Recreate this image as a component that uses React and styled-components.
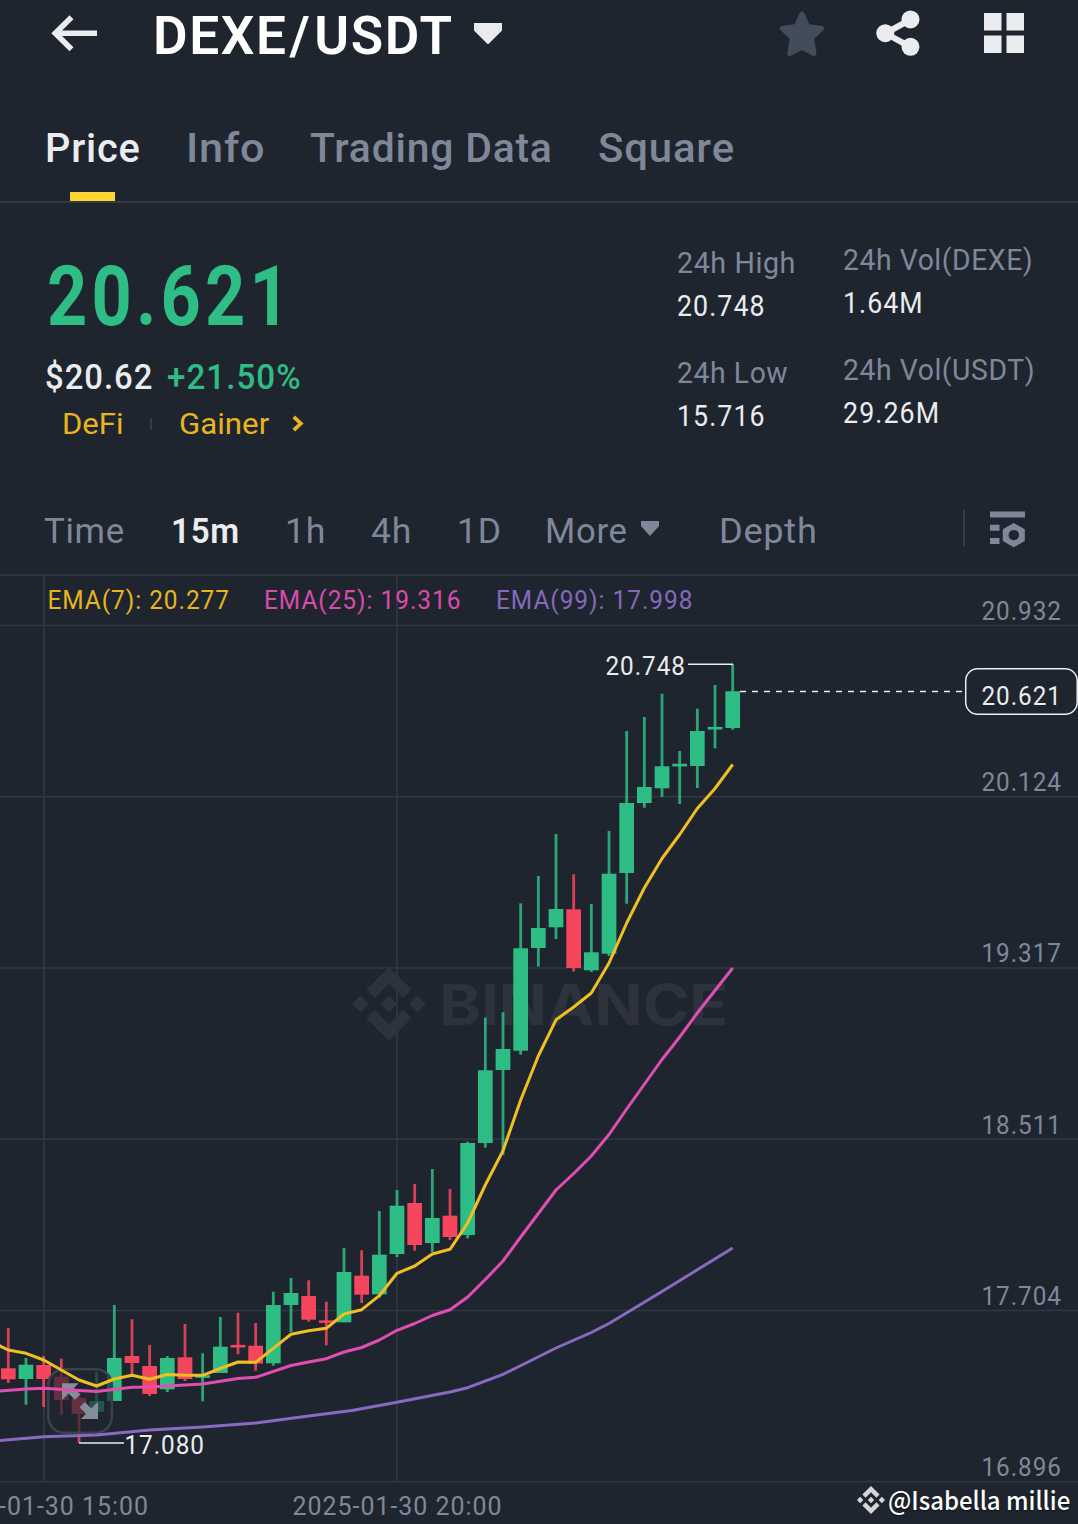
import React, { useLayoutEffect, useRef, useState } from 'react';
import styled, { createGlobalStyle } from 'styled-components';

const green = '#2ebd85';
const red = '#f6465d';
const grey = '#7f8898';
const light = '#eaecef';
const gold = '#e9b41c';

const BINANCE = 'M16.624 13.9202l2.7175 2.7154-7.353 7.353-7.353-7.352 2.7175-2.7164 4.6355 4.6595 4.6356-4.6595zm4.6366-4.6366L24 12l-2.7154 2.7164L18.5682 12l2.6924-2.7164zm-9.272.001l2.7163 2.6914-2.7164 2.7174v-.001L9.2721 12l2.7164-2.7154zm-9.2722-.001L5.4088 12l-2.6914 2.6924L0 12l2.7164-2.7164zM11.9885.0115l7.353 7.329-2.7174 2.7154-4.6356-4.6356-4.6355 4.6595-2.7174-2.7154 7.353-7.353z';

// [direction, high, body top, body bottom, low]
const candles = [
  ['r', 1328, 1368.3, 1379.3, 1383],
  ['g', 1358, 1364.7, 1379, 1404.7],
  ['r', 1356, 1365, 1379, 1407],
  ['r', 1358.7, 1376.7, 1400, 1415],
  ['r', 1390, 1398, 1414, 1442.7],
  ['g', 1371.7, 1401, 1411.7, 1411.7],
  ['g', 1305, 1358, 1401, 1401],
  ['r', 1319.3, 1356, 1363, 1375],
  ['r', 1345, 1366, 1394, 1396],
  ['g', 1356, 1358, 1389.3, 1392],
  ['r', 1324, 1357.3, 1379, 1381],
  ['g', 1353.3, 1375.3, 1377.8, 1401.3],
  ['g', 1317, 1346.7, 1373, 1373],
  ['r', 1312.7, 1344.9, 1347.5, 1354.3],
  ['r', 1323, 1345.7, 1363.5, 1370.7],
  ['g', 1291.7, 1305, 1363.3, 1365.7],
  ['g', 1278, 1293, 1305, 1332],
  ['r', 1280.3, 1296, 1319.7, 1321.7],
  ['r', 1301.7, 1320.4, 1322.9, 1345.3],
  ['g', 1248, 1272, 1322.3, 1322.3],
  ['r', 1250.3, 1275.7, 1294.7, 1303],
  ['g', 1211, 1254.7, 1294.3, 1297.7],
  ['g', 1190, 1205.7, 1254, 1257],
  ['r', 1184, 1203, 1245, 1250.7],
  ['g', 1169, 1218, 1243, 1252.3],
  ['r', 1189, 1215.7, 1237, 1240],
  ['g', 1141.7, 1143, 1235, 1238.3],
  ['g', 1017.7, 1070.3, 1143, 1147.7],
  ['g', 1012.3, 1049, 1070, 1155],
  ['g', 903.3, 948.3, 1050.7, 1054.7],
  ['g', 876, 928, 948, 966.5],
  ['g', 834, 909, 927.3, 939],
  ['r', 874.3, 909.3, 968, 971.5],
  ['g', 904, 952.3, 970.3, 972],
  ['g', 831, 873.7, 953.7, 956],
  ['g', 731, 803, 873, 903.7],
  ['g', 717, 787, 803, 807.7],
  ['g', 693.7, 766.3, 788.3, 797],
  ['g', 751, 763.8, 766.4, 804],
  ['g', 708.7, 731, 766, 788],
  ['g', 685, 726.9, 729.5, 748.3],
  ['g', 664, 691.3, 728, 729.7],
];

const ema7 = '-2,1345 8.3,1350 26,1353.3 43.7,1360 61.3,1370 79,1380 96.7,1386 114.3,1379 132,1375.3 149.7,1379.3 167.3,1374.5 185,1375.3 202.7,1375.3 220.3,1368.5 238,1362 255.7,1362.3 273.3,1348.3 291,1334.3 308.7,1330.7 326.3,1328.3 344,1314 361.7,1309.7 379.3,1295.7 397,1273.3 414.7,1266 432.3,1254 450,1249.3 467.7,1223 485.3,1185 503,1150.7 520.7,1100 538.3,1056 556,1019.8 573.7,1007 591.3,993 609,963 626.7,923 644.3,888 662,858.5 679.7,834.5 697.3,808.5 715,788.5 732.7,764.5';
const ema25 = '-2,1391.2 26,1389 43.7,1388.3 79,1390.5 96.7,1391.5 132,1387.3 149.7,1387 167.3,1386 202.7,1384 238,1378.5 255.7,1377.3 291,1365.5 308.7,1362 326.3,1358.7 344,1352 361.7,1347.5 379.3,1340 397,1330.3 414.7,1323.5 432.3,1315.5 450,1309.7 467.7,1297 485.3,1279.5 503,1261 520.7,1237 556,1190 573.7,1173.5 591.3,1156 609,1134.5 626.7,1109 662,1059.5 679.7,1037 697.3,1013 732.7,968';
const ema99 = '-2,1440.6 43.7,1436.8 96.7,1435 149.7,1430 202.7,1427 255.7,1423 308.7,1416 352,1410.5 397,1402.3 450,1392 467.7,1387.7 503,1374.3 530,1361 556,1348 591.3,1332.5 609,1323.5 662,1291.5 697.3,1269.8 732.7,1248';

const axis = [
  [625.5, '20.932'],
  [796.7, '20.124'],
  [968, '19.317'],
  [1139.2, '18.511'],
  [1310.5, '17.704'],
  [1481.7, '16.896'],
];

// squeezes or stretches a run of text to a given width
function Fit({ w, children }) {
  const ref = useRef(null);
  const [scale, setScale] = useState(1);

  useLayoutEffect(() => {
    setScale(w / ref.current.offsetWidth);
  }, [w, children]);

  return (
    <FitBox $w={w}>
      <FitText ref={ref} style={{ transform: `scaleX(${scale})` }}>{children}</FitText>
    </FitBox>
  );
}

function Stat({ label, lw, value, vw }) {
  return (
    <StatItem>
      <StatLabel><Fit w={lw}>{label}</Fit></StatLabel>
      <StatValue><Fit w={vw}>{value}</Fit></StatValue>
    </StatItem>
  );
}

function Candle({ data, x }) {
  const [dir, high, top, bottom, low] = data;
  const color = dir === 'g' ? green : red;
  return (
    <g fill={color}>
      <rect x={x - 1.4} y={high} width="2.8" height={low - high} opacity="0.85" />
      <rect x={x - 7.35} y={top} width="14.7" height={bottom - top} />
    </g>
  );
}

function Chart() {
  return (
    <ChartSvg viewBox="0 576 1078 948">
      <g fill="#2f3742">
        {axis.map(([y]) => <rect key={y} x="0" y={y - 0.8} width="1078" height="1.6" />)}
        <rect x="43" y="576" width="1.8" height="906" />
        <rect x="396.1" y="576" width="1.8" height="906" />
      </g>

      <g fill="#2d323d">
        <path d={BINANCE} transform="translate(352 967) scale(3.08)" />
        <Brand x="439" y="1024.5" textLength="289" lengthAdjust="spacingAndGlyphs">BINANCE</Brand>
      </g>

      {candles.map((c, i) => <Candle key={i} data={c} x={8.3 + i * 17.668} />)}

      <rect x="48.3" y="1369.300" width="63.5" height="63.5" rx="16" fill="#1f252f" fillOpacity="0.68" stroke="#39414c" strokeWidth="2.6" />
      <g fill="#848d9b">
        <path d="M62 1383.300h16.700l-4.700 4.700 6.300 6.500-5.300 5.300-6.500-6.300-6.500 6.500z" />
        <path d="M98 1419h-17.200l5.200-5.200-6.500-6.500 5.300-5.300 6.500 6.500 6.700-6.700z" />
      </g>

      <Line points={ema99} stroke="#8a69c2" />
      <Line points={ema25} stroke="#e14eb2" />
      <Line points={ema7} stroke="#f0bf22" />

      <g stroke={light} strokeWidth="1.5" fill="none">
        <path d="M688 664.300h45" />
        <path d="M79 1443h45" />
        <path d="M740 691.500h222" strokeDasharray="6 6" />
        <rect x="965.7" y="668.7" width="111.5" height="45.6" rx="12" />
      </g>

      <Num x="47.5" y="609" textLength="182.5" fill={gold}>EMA(7): 20.277</Num>
      <Num x="264" y="609" textLength="197.5" fill="#d94bad">EMA(25): 19.316</Num>
      <Num x="496" y="609" textLength="197.5" fill="#8668bd">EMA(99): 17.998</Num>
      {axis.map(([y, text]) => (
        <Num key={text} x="981.5" y={y - 5.7} textLength="80.5" fill={grey}>{text}</Num>
      ))}
      <Num x="981.5" y="705" textLength="80.5" fill={light}>20.621</Num>
      <Num x="605.5" y="675" textLength="80.5" fill={light}>20.748</Num>
      <Num x="124.5" y="1453.7" textLength="80.5" fill={light}>17.080</Num>
      <Num x="-61" y="1514.7" textLength="210" fill={grey}>2025-01-30 15:00</Num>
      <Num x="292.5" y="1514.7" textLength="210" fill={grey}>2025-01-30 20:00</Num>
    </ChartSvg>
  );
}

export default function App() {
  return (
    <Screen>
      <GlobalStyle />
      <Header>
        <svg width="46" height="70" viewBox="51 0 46 70" fill="none" stroke={light} strokeWidth="5.6">
          <path d="M97 33.2H56M71.5 17.3L55.3 33.2l16.2 16" />
        </svg>
        <Title><Fit w={301}>DEXE<Slash>/</Slash>USDT</Fit></Title>
        <svg width="28" height="70" viewBox="474 0 28 70" fill={light}>
          <path d="M474 23h28v7.5L488.500 44h-1L474 30.500z" />
        </svg>
        <Actions>
          <svg width="45" height="70" viewBox="779 0 45 70" fill="#434c5a" stroke="#434c5a" strokeWidth="5" strokeLinejoin="round">
            <path d="M802 14L807.500 26.500L821.500 28.500L811.500 38L814 53.500L802 47.300L789.800 53.500L792.300 38L782.300 28.500L796.300 26.500Z" />
          </svg>
          <svg width="44" height="70" viewBox="876 0 44 70" fill={light}>
            <path d="M910.500 19.500L885.500 33.300L910.500 47" fill="none" stroke={light} strokeWidth="6" />
            <circle cx="910.5" cy="19.400" r="9" />
            <circle cx="885.3" cy="33.200" r="9" />
            <circle cx="910.5" cy="46.800" r="9" />
          </svg>
          <svg width="40" height="70" viewBox="984 0 40 70" fill={light}>
            <path d="M984 13h17.500v17.500H984zM1006.500 13h17.500v17.500h-17.500zM984 35.500h17.500V53H984zM1006.500 35.500h17.500V53h-17.500z" />
          </svg>
        </Actions>
      </Header>

      <Tabs>
        <Tab $active><Fit w={96}>Price</Fit></Tab>
        <Tab><Fit w={79}>Info</Fit></Tab>
        <Tab><Fit w={243}>Trading Data</Fit></Tab>
        <Tab><Fit w={137}>Square</Fit></Tab>
      </Tabs>

      <Summary>
        <PriceSide>
          <LastPrice><Fit w={247}>20.621</Fit></LastPrice>
          <Change>
            <Fit w={108}>$20.62</Fit>
            <Up><Fit w={135}>+21.50%</Fit></Up>
          </Change>
          <Tags>
            <Fit w={61}>DeFi</Fit>
            <TagDivider />
            <Fit w={90}>Gainer</Fit>
            <svg width="12" height="17" viewBox="0 0 12 17" fill="none" stroke={gold} strokeWidth="3.8">
              <path d="M1.800 1.800L8.800 8.500L1.800 15.200" />
            </svg>
          </Tags>
        </PriceSide>
        <StatColumn $top={42} $width={166}>
          <Stat label="24h High" lw={118.5} value="20.748" vw={88.5} />
          <Stat label="24h Low" lw={111.5} value="15.716" vw={88.5} />
        </StatColumn>
        <StatColumn $top={38.5} $tight>
          <Stat label="24h Vol(DEXE)" lw={190} value="1.64M" vw={81} />
          <Stat label="24h Vol(USDT)" lw={192} value="29.26M" vw={97} />
        </StatColumn>
      </Summary>

      <Ranges>
        <Fit w={81}>Time</Fit>
        <Active><Fit w={69}>15m</Fit></Active>
        <Fit w={41}>1h</Fit>
        <Fit w={41}>4h</Fit>
        <Fit w={45}>1D</Fit>
        <More>
          <Fit w={83}>More</Fit>
          <svg width="18" height="44" viewBox="0 0 18 44" fill={grey}>
            <path d="M0 12h18v5l-8.500 9.500h-1L0 17z" />
          </svg>
        </More>
        <Depth><Fit w={99}>Depth</Fit></Depth>
        <RangeDivider />
        <svg width="35" height="44" viewBox="990 509 35 44" fill={grey}>
          <path d="M990 511.500h35v6h-35zM990 524.800h9.500v6H990zM990 538h9.500v6H990z" />
          <path fillRule="evenodd" d="M1013.800 523l11 6.300v11.600l-11 6.300-11-6.300v-11.600zM1013.800 529.900a5.200 5.200 0 1 0 .01 0z" />
        </svg>
      </Ranges>

      <ChartArea>
        <Chart />
        <Author>
          <svg width="28" height="28" viewBox="0 0 24 24" fill="#d5d6d8"><path d={BINANCE} /></svg>
          <Fit w={182}>@Isabella millie</Fit>
        </Author>
      </ChartArea>
    </Screen>
  );
}

const GlobalStyle = createGlobalStyle`
  body {
    margin: 0;
    background: #1f252f;
  }
  svg {
    display: block;
    flex: none;
  }
`;

const Screen = styled.div`
  width: 1078px;
  height: 1524px;
  overflow: hidden;
  background: #1f252f;
  color: ${light};
  font-family: Roboto, "Liberation Sans", sans-serif;
`;

const FitBox = styled.span`
  display: block;
  flex: none;
  width: ${(p) => p.$w}px;
`;

const FitText = styled.span`
  display: inline-block;
  white-space: nowrap;
  transform-origin: 0 50%;
`;

const Header = styled.header`
  display: flex;
  height: 70px;
  padding: 0 54px 0 51px;
`;

const Title = styled.div`
  margin: 2px 20px 0 56px;
  font-size: 54px;
  line-height: 68px;
  font-weight: 600;
  letter-spacing: 0.03em;
  color: #fff;
`;

const Slash = styled.span`
  margin: 0 3px 0 2px;
`;

const Actions = styled.div`
  display: flex;
  gap: 52px;
  margin-left: auto;

  svg:last-child {
    margin-left: 12px;
  }
`;

const Tabs = styled.nav`
  display: flex;
  gap: 45px;
  box-sizing: border-box;
  height: 133px;
  padding: 53px 0 0 44.500px;
  border-bottom: 2px solid #323a45;
`;

const Tab = styled.div`
  display: flex;
  flex-direction: column;
  align-items: center;
  font-size: 41px;
  line-height: 50px;
  font-weight: 500;
  letter-spacing: 0.02em;
  color: ${(p) => (p.$active ? light : grey)};

  &::after {
    content: '';
    width: 45px;
    height: 9px;
    margin-top: 19px;
    background: ${(p) => (p.$active ? '#fcd535' : 'none')};
  }
`;

const Summary = styled.section`
  display: flex;
  height: 287px;
`;

const PriceSide = styled.div`
  width: 631.500px;
  padding: 54px 0 0 45px;
`;

const LastPrice = styled.div`
  margin-left: 1.500px;
  font-size: 83px;
  line-height: 80px;
  font-weight: 700;
  letter-spacing: 0.06em;
  color: ${green};
`;

const Change = styled.div`
  display: flex;
  gap: 14px;
  margin-top: 18px;
  font-size: 34.7px;
  line-height: 44px;
  font-weight: 500;
  letter-spacing: 0.03em;
`;

const Up = styled.div`
  color: ${green};
`;

const Tags = styled.div`
  display: flex;
  align-items: center;
  margin: 7px 0 0 17px;
  font-size: 29.5px;
  line-height: 36px;
  color: ${gold};

  svg {
    margin: -2px 0 0 23px;
  }
`;

const TagDivider = styled.div`
  width: 2px;
  height: 12px;
  margin: 0 27px;
  background: #353d49;
`;

const StatColumn = styled.div`
  display: flex;
  flex-direction: column;
  gap: 31px;
  box-sizing: border-box;
  width: ${(p) => (p.$width ? `${p.$width}px` : 'auto')};
  padding-top: ${(p) => p.$top}px;

  ${(p) => p.$tight && `
    > * {
      gap: 6px;
    }
  `}
`;

const StatItem = styled.div`
  display: flex;
  flex-direction: column;
  gap: 7px;
  line-height: 36px;
`;

const StatLabel = styled.div`
  font-size: 29.5px;
  letter-spacing: 0.02em;
  color: ${grey};
`;

const StatValue = styled.div`
  font-size: 29px;
  letter-spacing: 0.04em;
`;

const Ranges = styled.div`
  display: flex;
  gap: 45px;
  box-sizing: border-box;
  height: 86px;
  padding: 19px 0 0 44px;
  border-bottom: 2px solid #2c343f;
  font-size: 34.7px;
  line-height: 44px;
  letter-spacing: 0.02em;
  color: ${grey};
`;

const Active = styled.div`
  margin-left: 1px;
  font-weight: 600;
  color: ${light};
`;

const More = styled.div`
  display: flex;
  gap: 13px;
  margin-left: -2px;
`;

const Depth = styled.div`
  margin-left: 15px;
`;

const RangeDivider = styled.div`
  width: 2px;
  height: 36px;
  margin: 1px -20px 0 100px;
  background: #353d48;
`;

const ChartArea = styled.div`
  position: relative;
`;

const ChartSvg = styled.svg`
  width: 1078px;
  height: 948px;
`;

const Line = styled.polyline`
  fill: none;
  stroke-width: 3;
  stroke-linejoin: round;
`;

const Num = styled.text.attrs({ lengthAdjust: 'spacingAndGlyphs' })`
  font-size: 26px;
  letter-spacing: 0.04em;
`;

const Brand = styled.text`
  font-family: Inter, sans-serif;
  font-size: 56px;
  font-weight: 700;
`;

const Author = styled.div`
  position: absolute;
  right: 8px;
  bottom: 5px;
  display: flex;
  align-items: center;
  gap: 3px;
  height: 38px;
  font-family: "Noto Sans CJK SC", sans-serif;
  font-size: 25px;
  line-height: 35px;
  font-weight: 500;
  color: #fff;
  text-shadow: 0 1px 2px rgba(0, 0, 0, 0.6);

  span {
    margin-top: -1px;
  }
`;
